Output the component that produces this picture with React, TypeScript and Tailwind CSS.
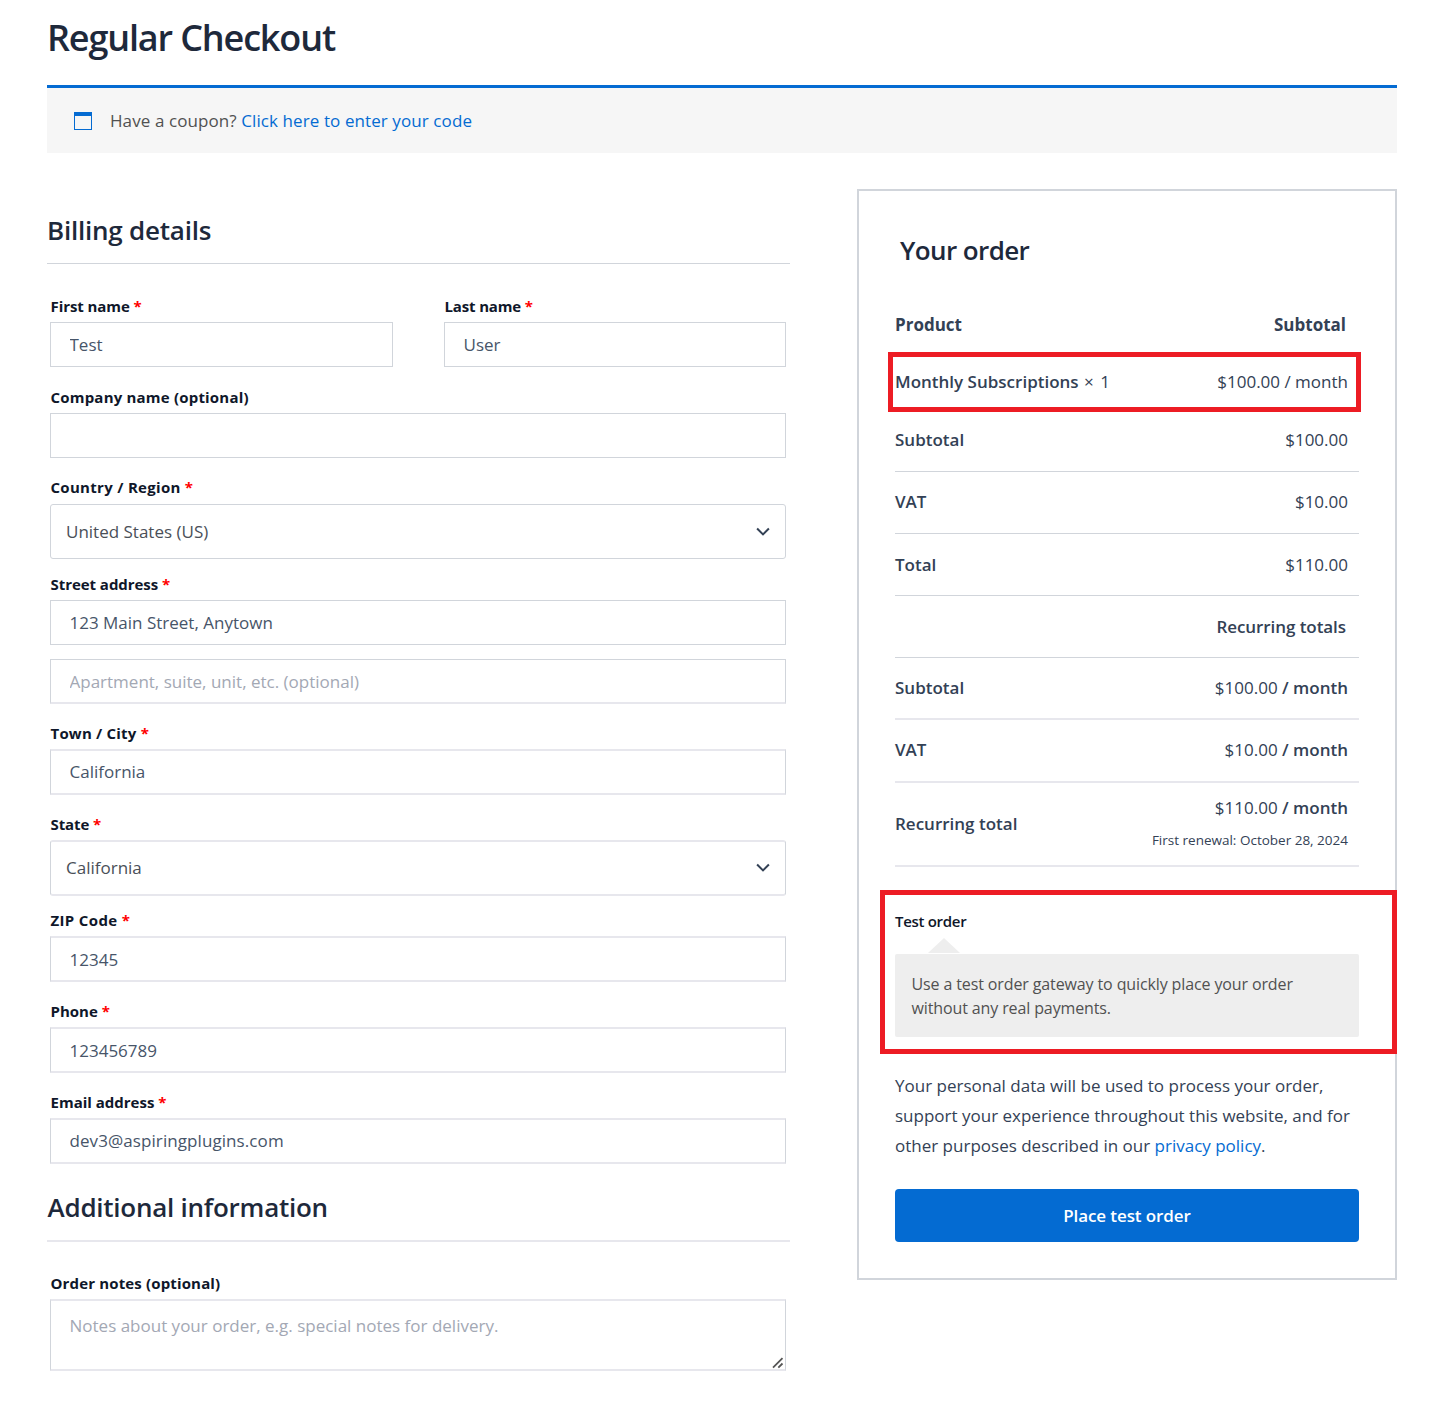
import type { ReactNode } from "react";

type LabelProps = { children: string; required?: boolean; className?: string };

function Label({ children, required, className = "" }: LabelProps) {
  return (
    <label
      className={"block pl-[0.5px] text-[15px] leading-5 font-bold text-[#0f172a] -mt-px mb-[6px] " + className}
    >
      {children}
      {required && <span className="text-[#ff0000]"> *</span>}
    </label>
  );
}

function Chevron() {
  return (
    <svg
      width="15"
      height="10"
      viewBox="0 0 15 10"
      fill="none"
      stroke="#334155"
      strokeWidth="2"
      className="mr-[14px]"
    >
      <path d="M1.1 1.5 L7 7.4 L12.9 1.5" />
    </svg>
  );
}

function OrderRow({ className, title, children }: { className: string; title: string; children: ReactNode }) {
  return (
    <div className={"flex items-center justify-between pr-[11px] " + className}>
      <span className="font-semibold">{title}</span>
      {children}
    </div>
  );
}

const input =
  "block w-full border border-[#d1d5db] bg-white pl-[18.5px] text-[17px] text-[#475569] placeholder:text-[#a3a8b4] outline-none";
const soft = "border-y-2 border-y-[#e7e7ed]";

function App() {
  return (
    <div className="min-h-[1419px] bg-white pl-[47px] pr-[59px] pt-[15px] font-['Open_Sans',sans-serif]">
      <h1 className="text-[36px] leading-[46px] font-semibold tracking-[-1.15px] text-[#1e293b]">
        Regular Checkout
      </h1>

      <div className="mt-6 flex h-[68px] items-center border-t-[3px] border-[#046bd2] bg-[#f6f6f6] pl-[27px] text-[17px] tracking-[0.09px] text-[#515151]">
        <span className="size-[18px] border border-t-4 border-[#046bd2]"></span>
        <p className="ml-[18px]">
          Have a coupon?{" "}
          <a href="#" className="text-[#046bd2]">
            Click here to enter your code
          </a>
        </p>
      </div>

      <div className="mt-9 flex items-start justify-between">
        <form className="w-[743px]">
          <h3 className="h-[75px] border-b border-[#d1d5db] pt-[21px] text-[26px] leading-10 font-semibold tracking-[-0.22px] text-[#1e293b]">
            Billing details
          </h3>

          <div className="mt-[33px] pl-[3px] pr-[4px]">
            <div className="flex justify-between">
              <div className="w-[343px]">
                <Label required className="tracking-[-0.08px]">First name</Label>
                <input className={input + " h-[45px]"} defaultValue="Test" />
              </div>
              <div className="w-[342px]">
                <Label required className="tracking-[-0.15px]">Last name</Label>
                <input className={input + " h-[45px]"} defaultValue="User" />
              </div>
            </div>

            <div className="mt-[21px]">
              <Label className="tracking-[0.2px]">Company name (optional)</Label>
              <input className={input + " h-[45px]"} />
            </div>

            <div className="mt-5">
              <Label required className="tracking-[0.3px]">Country / Region</Label>
              <div className="mt-[7px] flex h-[55px] items-center justify-between rounded-[3px] border border-[#d1d5db] pl-[15px] text-[17px] text-[#4a4f58]">
                <span>United States (US)</span>
                <Chevron />
              </div>
            </div>

            <div className="mt-4">
              <Label required className="tracking-[-0.05px]">Street address</Label>
              <input className={input + " h-[45px]"} defaultValue="123 Main Street, Anytown" />
              <input
                className={input + " mt-[14px] h-[45px] border-b-2 border-b-[#e7e7ed]"}
                placeholder="Apartment, suite, unit, etc. (optional)"
              />
            </div>

            <div className="mt-5">
              <Label required className="tracking-[0.2px]">Town / City</Label>
              <input className={input + " h-[46px] pb-px " + soft} defaultValue="California" />
            </div>

            <div className="mt-5">
              <Label required className="tracking-[-0.1px]">State</Label>
              <div
                className={
                  "flex h-[56px] items-center justify-between rounded-[3px] border border-[#d1d5db] pl-[15px] text-[17px] text-[#4a4f58] " +
                  soft
                }
              >
                <span>California</span>
                <Chevron />
              </div>
            </div>

            <div className="mt-[15px]">
              <Label required className="tracking-[0.35px]">ZIP Code</Label>
              <input className={input + " h-[46px] " + soft} defaultValue="12345" />
            </div>

            <div className="mt-5">
              <Label required>Phone</Label>
              <input className={input + " h-[46px] " + soft} defaultValue="123456789" />
            </div>

            <div className="mt-5">
              <Label required>Email address</Label>
              <input
                className={input + " h-[46px] pb-px tracking-[0.08px] " + soft}
                defaultValue="dev3@aspiringplugins.com"
              />
            </div>
          </div>

          <h3 className="mt-[23px] border-b-2 border-[#e7e7ed] pb-[13px] pl-[0.5px] text-[26px] leading-10 font-semibold tracking-[-0.25px] text-[#1e293b]">
            Additional information
          </h3>

          <div className="mt-8 pl-[3px] pr-[4px]">
            <Label className="tracking-[0.15px]">Order notes (optional)</Label>
            <div className="relative">
              <textarea
                className={input + " h-[72px] resize-none pt-3 leading-[25px] " + soft}
                placeholder="Notes about your order, e.g. special notes for delivery."
              />
              <svg
                width="12"
                height="12"
                viewBox="0 0 12 12"
                stroke="#555"
                strokeWidth="1.8"
                className="absolute right-[2px] bottom-[2px]"
              >
                <path d="M1 10.7 L10.5 1.2 M6.3 10.7 L10.5 6.5" />
              </svg>
            </div>
          </div>
        </form>

        <div className="w-[540px] border-2 border-[#d1d5db] px-9 pt-[39px] pb-9 text-[17px] text-[#334155]">
          <h3 className="pl-[5px] text-[26px] leading-10 font-semibold tracking-[-0.6px] text-[#1e293b]">Your order</h3>

          <div className="mt-6 flex h-[61px] items-center justify-between pr-[13px] font-bold">
            <span>Product</span>
            <span>Subtotal</span>
          </div>
          <div className="relative flex h-[53px] items-center justify-between pr-[11px]">
            <span>
              <span className="font-semibold">Monthly Subscriptions</span>
              <span className="tracking-[1px]"> × 1</span>
            </span>
            <span>$100.00 / month</span>
            <div className="absolute -top-[3px] -left-[7px] h-[60px] w-[473px] border-[5px] border-[#ed1c24]"></div>
          </div>
          <OrderRow className="h-16 border-b border-[#d1d5db]" title="Subtotal">
            <span>$100.00</span>
          </OrderRow>
          <OrderRow className="h-[62px] border-b border-[#d1d5db] pb-[2px]" title="VAT">
            <span>$10.00</span>
          </OrderRow>
          <OrderRow className="h-[62px] border-b border-[#d1d5db]" title="Total">
            <span>$110.00</span>
          </OrderRow>
          <div className="flex h-[62px] items-center justify-end border-b border-[#d1d5db] pr-[13px] font-semibold tracking-[-0.07px]">
            Recurring totals
          </div>
          <OrderRow className="h-[62px] border-b-2 border-[#e7e7ed]" title="Subtotal">
            <span>
              $100.00 <span className="font-semibold">/ month</span>
            </span>
          </OrderRow>
          <OrderRow className="h-[63px] border-b-2 border-[#e7e7ed] pb-[2px]" title="VAT">
            <span>
              $10.00 <span className="font-semibold">/ month</span>
            </span>
          </OrderRow>
          <OrderRow className="h-[84px] border-b-2 border-[#e7e7ed] pb-px" title="Recurring total">
            <div className="text-right leading-8">
              <p>
                $110.00 <span className="font-semibold">/ month</span>
              </p>
              <p className="text-[13.5px] leading-8">First renewal: October 28, 2024</p>
            </div>
          </OrderRow>

          <div className="relative mt-11">
            <p className="text-[15px] leading-5 font-semibold tracking-[-0.3px] text-[#0f172a]">Test order</p>
            <svg width="32" height="16" viewBox="0 0 32 16" className="absolute top-[27px] left-[33px]">
              <path d="M16 0 L32 15 H0 Z" fill="#eee" />
            </svg>
            <div className="mt-[23px] h-[83px] rounded-[2px] bg-[#eee] pt-[18px] pl-[16.5px] text-[16px] leading-6 tracking-[-0.12px] text-[#515151]">
              Use a test order gateway to quickly place your order
              <br />
              without any real payments.
            </div>
            <div className="absolute -top-[21px] -left-[15px] h-[164px] w-[517px] border-[5px] border-[#ed1c24]"></div>
          </div>

          <p className="mt-[34px] leading-[30px] whitespace-nowrap">
            Your personal data will be used to process your order,
            <br />
            support your experience throughout this website, and for
            <br />
            other purposes described in our{" "}
            <a href="#" className="text-[#046bd2]">
              privacy policy
            </a>
            .
          </p>
          <button className="mt-7 block h-[53px] w-full rounded-[4px] bg-[#046bd2] font-semibold tracking-[-0.1px] text-white">
            Place test order
          </button>
        </div>
      </div>
    </div>
  );
}

export default App;
